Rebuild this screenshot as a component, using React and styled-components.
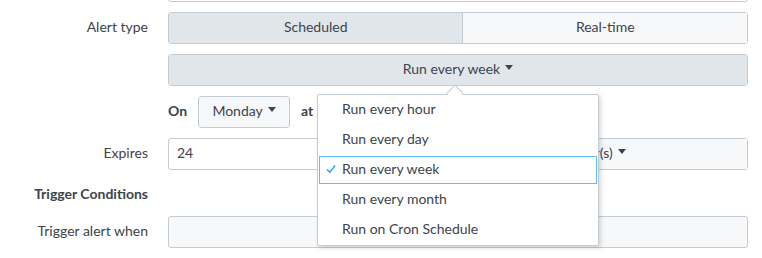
import React from "react";
import styled, { createGlobalStyle } from "styled-components";

const GlobalStyle = createGlobalStyle`
  body {
    margin: 0;
    background: #fff;
    font-family: Lato, "Open Sans", sans-serif;
    color: #3c444d;
    overflow: hidden;
  }
`;

const Form = styled.div`
  width: 748px;
  display: flex;
  flex-direction: column;
  gap: 10px;
  margin-top: -30px;
`;

const Row = styled.div`
  display: grid;
  grid-template-columns: 148px 580px;
  column-gap: 20px;
  align-items: center;
  height: ${(p) => p.h || 32}px;
`;

const Label = styled.div`
  text-align: right;
  font-size: 14px;
  font-weight: ${(p) => (p.bold ? 700 : 400)};
  padding-bottom: ${(p) => (p.bold ? 0 : 4)}px;
`;

const Field = styled.div`
  grid-column: 2;
  height: 32px;
  box-sizing: border-box;
  border: 1px solid #c3cbd4;
  border-radius: 3px;
  background: ${(p) => p.bg || "#fff"};
  display: flex;
  position: relative;
`;

const Segment = styled.div`
  flex: ${(p) => p.grow || 1};
  display: flex;
  align-items: center;
  justify-content: center;
  font-size: 14px;
  padding-bottom: 4px;
  background: ${(p) => (p.active ? "#e1e6eb" : "#f7f8fa")};
  border-right: ${(p) => (p.divider ? "1px solid #c3cbd4" : "none")};
`;

const Caret = styled.span`
  display: inline-block;
  width: 0;
  height: 0;
  border-left: 4px solid transparent;
  border-right: 4px solid transparent;
  border-top: 5px solid #3c444d;
  margin-left: 5px;
  vertical-align: middle;
  position: relative;
  top: -1px;
`;

const Inline = styled.div`
  grid-column: 2;
  display: flex;
  align-items: center;
  gap: 11px;
  height: 32px;
  font-size: 14px;
  font-weight: 700;
`;

const SmallButton = styled.div`
  width: 92px;
  height: 32px;
  box-sizing: border-box;
  border: 1px solid #c3cbd4;
  border-radius: 3px;
  background: #f7f8fa;
  display: flex;
  align-items: center;
  justify-content: center;
  font-weight: 400;
  font-size: 14px;
  padding-bottom: 4px;
`;

const Text = styled.span`
  padding-bottom: 4px;
`;

const Input = styled.div`
  width: 272px;
  display: flex;
  align-items: center;
  padding-left: 8px;
  padding-bottom: 4px;
  font-size: 14px;
  border-right: 1px solid #c3cbd4;
`;

const Menu = styled.div`
  position: absolute;
  top: 39px;
  left: 148px;
  width: 282px;
  height: 152px;
  box-sizing: border-box;
  background: #fff;
  border: 1px solid #c3cbd4;
  border-radius: 2px;
  box-shadow: 2px 2px 4px rgba(0, 0, 0, 0.15);
  padding: 0 1px;
  z-index: 2;
  &::before {
    content: "";
    position: absolute;
    top: -8px;
    left: 131px;
    width: 11px;
    height: 11px;
    background: #fff;
    border-left: 1px solid #c3cbd4;
    border-top: 1px solid #c3cbd4;
    transform: rotate(45deg);
    transform-origin: center;
  }
`;

const Item = styled.div`
  position: relative;
  box-sizing: border-box;
  display: flex;
  align-items: center;
  padding-left: 22px;
  padding-bottom: 3px;
  font-size: 14px;
  border: 1px solid ${(p) => (p.selected ? "#5cc0f5" : "transparent")};
  margin: ${(p) => (p.selected ? "1px 0" : "0")};
  height: ${(p) => (p.selected ? "28px" : "30px")};
`;

const Check = styled.svg`
  position: absolute;
  left: 6px;
  top: 7px;
`;

const items = [
  "Run every hour",
  "Run every day",
  "Run every week",
  "Run every month",
  "Run on Cron Schedule",
];

export default function App() {
  return (
    <>
      <GlobalStyle />
      <Form>
        <Row>
          <Field />
        </Row>
        <Row>
          <Label>Alert type</Label>
          <Field>
            <Segment active divider grow={295}>Scheduled</Segment>
            <Segment grow={285}>Real-time</Segment>
          </Field>
        </Row>
        <Row>
          <Field bg="#e1e6eb">
            <Segment active>
              Run every week
              <Caret />
            </Segment>
            <Menu>
              {items.map((t) => (
                <Item key={t} selected={t === "Run every week"}>
                  {t === "Run every week" && (
                    <Check width="10" height="10" viewBox="0 0 10 10">
                      <path d="M1 5.5 L3.8 8.3 L9 1.5" fill="none" stroke="#1a9cf0" strokeWidth="1.3" />
                    </Check>
                  )}
                  {t}
                </Item>
              ))}
            </Menu>
          </Field>
        </Row>
        <Row>
          <Inline>
            <Text>On</Text>
            <SmallButton>
              Monday
              <Caret />
            </SmallButton>
            <Text>at</Text>
          </Inline>
        </Row>
        <Row>
          <Label>Expires</Label>
          <Field>
            <Input>24</Input>
            <Segment>
              hour(s)
              <Caret />
            </Segment>
          </Field>
        </Row>
        <Row h={26}>
          <Label bold>Trigger Conditions</Label>
        </Row>
        <Row>
          <Label>Trigger alert when</Label>
          <Field bg="#f7f8fa" />
        </Row>
        <Row>
          <Field />
        </Row>
      </Form>
    </>
  );
}
